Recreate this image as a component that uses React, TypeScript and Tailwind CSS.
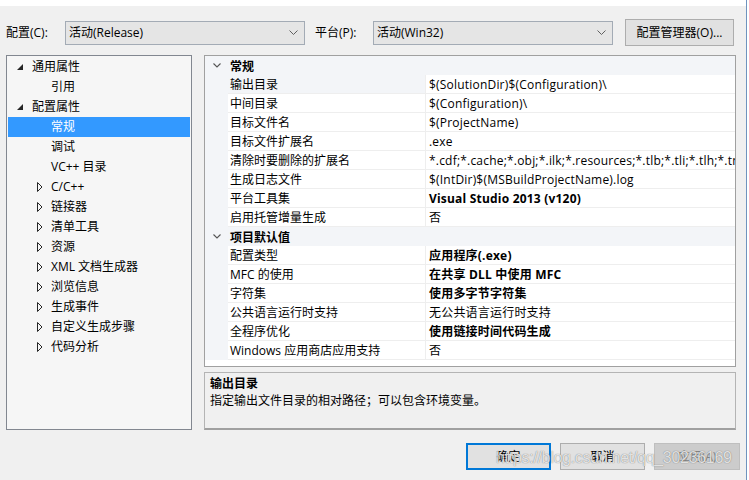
import React from "react";

type TreeItem = { label: string; level: 0 | 1; arrow?: "open" | "closed"; selected?: boolean };

const tree: TreeItem[] = [
  { label: "通用属性", level: 0, arrow: "open" },
  { label: "引用", level: 1 },
  { label: "配置属性", level: 0, arrow: "open" },
  { label: "常规", level: 1, selected: true },
  { label: "调试", level: 1 },
  { label: "VC++ 目录", level: 1 },
  { label: "C/C++", level: 1, arrow: "closed" },
  { label: "链接器", level: 1, arrow: "closed" },
  { label: "清单工具", level: 1, arrow: "closed" },
  { label: "资源", level: 1, arrow: "closed" },
  { label: "XML 文档生成器", level: 1, arrow: "closed" },
  { label: "浏览信息", level: 1, arrow: "closed" },
  { label: "生成事件", level: 1, arrow: "closed" },
  { label: "自定义生成步骤", level: 1, arrow: "closed" },
  { label: "代码分析", level: 1, arrow: "closed" },
];

type GridRow = { cat?: string; name?: string; value?: string; bold?: boolean; selected?: boolean };

const grid: GridRow[] = [
  { cat: "常规" },
  { name: "输出目录", value: "$(SolutionDir)$(Configuration)\\", selected: true },
  { name: "中间目录", value: "$(Configuration)\\" },
  { name: "目标文件名", value: "$(ProjectName)" },
  { name: "目标文件扩展名", value: ".exe" },
  { name: "清除时要删除的扩展名", value: "*.cdf;*.cache;*.obj;*.ilk;*.resources;*.tlb;*.tli;*.tlh;*.tmp;*.rsp;*.pgc;*.pgd;*.meta;$(TargetPath)" },
  { name: "生成日志文件", value: "$(IntDir)$(MSBuildProjectName).log" },
  { name: "平台工具集", value: "Visual Studio 2013 (v120)", bold: true },
  { name: "启用托管增量生成", value: "否" },
  { cat: "项目默认值" },
  { name: "配置类型", value: "应用程序(.exe)", bold: true },
  { name: "MFC 的使用", value: "在共享 DLL 中使用 MFC", bold: true },
  { name: "字符集", value: "使用多字节字符集", bold: true },
  { name: "公共语言运行时支持", value: "无公共语言运行时支持" },
  { name: "全程序优化", value: "使用链接时间代码生成", bold: true },
  { name: "Windows 应用商店应用支持", value: "否" },
];

function ComboChevron() {
  return (
    <svg width="9" height="5" viewBox="0 0 9 5" className="shrink-0">
      <polyline points="0.5,0.5 4.5,4.5 8.5,0.5" fill="none" stroke="#606060" strokeWidth="1" />
    </svg>
  );
}

function Combo({ value, className }: { value: string; className: string }) {
  return (
    <div className={`flex h-6 items-center justify-between border border-[#a3abb5] bg-[#e5e5e5] pl-[3px] pr-[6px] ${className}`}>
      <span className="pt-[1px]">{value}</span>
      <ComboChevron />
    </div>
  );
}

function TreeArrow({ kind }: { kind: "open" | "closed" }) {
  if (kind === "open") {
    return (
      <svg width="6" height="6" viewBox="0 0 6 6">
        <polygon points="0,6 6,6 6,0" fill="#262626" />
      </svg>
    );
  }
  return (
    <svg width="6" height="10" viewBox="0 0 6 10">
      <polygon points="0.5,0.5 5,5 0.5,9.5" fill="none" stroke="#262626" strokeWidth="1" />
    </svg>
  );
}

function TreeRow({ item }: { item: TreeItem }) {
  const pad = item.level === 0 ? "pl-[9px]" : "pl-[29px]";
  const arrowBox = item.level === 0 ? "w-[15px]" : "w-[14px]";
  return (
    <div className={`flex h-5 items-center ${pad} ${item.selected ? "bg-[#3399ff] text-white" : ""}`}>
      <div className={`flex items-center ${arrowBox}`}>{item.arrow && <TreeArrow kind={item.arrow} />}</div>
      <span className="whitespace-nowrap">{item.label}</span>
    </div>
  );
}

function GridLine({ row }: { row: GridRow }) {
  if (row.cat) {
    return (
      <div className="flex h-[19px] items-center bg-[#f3f5f8]">
        <div className="flex w-[23px] justify-center pl-[1px]">
          <svg width="8" height="5" viewBox="0 0 8 5">
            <polyline points="0.5,0.5 4,4 7.5,0.5" fill="none" stroke="#555555" strokeWidth="1.1" />
          </svg>
        </div>
        <span className="pl-[2px] pt-[2px] font-bold">{row.cat}</span>
      </div>
    );
  }
  return (
    <div className="flex h-[19px]">
      <div className="w-[23px] shrink-0 bg-[#f3f5f8]" />
      <div
        className={`flex w-[197px] shrink-0 items-center overflow-hidden whitespace-nowrap border-b border-[#eeeeee] pl-[2px] pt-[2px] ${
          row.selected ? "bg-[#f3f5f8]" : "bg-white"
        }`}
      >
        {row.name}
      </div>
      <div
        className={`flex min-w-0 flex-1 items-center overflow-hidden whitespace-nowrap border-b border-l border-[#eeeeee] bg-white pl-[3px] pt-[2px] tracking-[0.2px] ${
          row.bold ? "font-bold" : ""
        }`}
      >
        {row.value}
      </div>
    </div>
  );
}

function DialogButton({ label, kind }: { label: string; kind: "default" | "normal" | "disabled" }) {
  const styles = {
    default: "border-2 border-[#0078d7] bg-[#e1e1e1] text-black",
    normal: "border border-[#adadad] bg-[#e1e1e1] text-black",
    disabled: "border border-[#bfbfbf] bg-[#cccccc] text-[#838383]",
  }[kind];
  return <div className={`flex h-full items-center justify-center ${styles}`}>{label}</div>;
}

export default function App() {
  return (
    <div className="relative flex h-[480px] w-[749px] overflow-hidden bg-white font-['Open_Sans','Noto_Sans_CJK_SC',sans-serif] text-[12px] leading-none text-black">
      <div className="flex w-[746px] flex-col bg-[#f0f0f0]">
        <div className="h-[6px] bg-white" />

        {/* toolbar */}
        <div className="mt-[13px] flex h-[27px] items-center">
          <span className="ml-[6px] w-[59px] pt-[1px]">配置(C):</span>
          <Combo value="活动(Release)" className="w-[240px]" />
          <span className="ml-[10px] w-[58px] pt-[1px]">平台(P):</span>
          <Combo value="活动(Win32)" className="w-[240px]" />
          <div className="ml-[12px] flex h-[27px] w-[109px] items-center justify-center border border-[#adadad] bg-[#e1e1e1] pt-[1px]">
            配置管理器(O)...
          </div>
        </div>

        {/* main content */}
        <div className="mt-[9px] flex h-[375px]">
          <div className="ml-[6px] w-[186px] border border-[#828790] bg-[#f6f6f6] p-px">
            {tree.map((t) => (
              <TreeRow key={t.label} item={t} />
            ))}
          </div>

          <div className="ml-[12px] flex w-[532px] flex-col">
            <div className="h-[312px] overflow-hidden border border-[#a0a0a0] bg-white">
              {grid.map((r, i) => (
                <GridLine key={i} row={r} />
              ))}
            </div>
            <div className="mt-[5px] h-[58px] border border-b-2 border-[#b4b4b4] border-b-[#a0a0a0] bg-[#f0f0f0] px-[5px] pt-[5px]">
              <div className="font-bold">输出目录</div>
              <div className="mt-[5px]">指定输出文件目录的相对路径；可以包含环境变量。</div>
            </div>
          </div>
        </div>

        {/* dialog buttons */}
        <div className="mt-[13px] flex h-[27px] justify-end gap-[9px] pr-[6px]">
          <div className="w-[85px]">
            <DialogButton label="确定" kind="default" />
          </div>
          <div className="w-[85px]">
            <DialogButton label="取消" kind="normal" />
          </div>
          <div className="w-[86px]">
            <DialogButton label="应用(A)" kind="disabled" />
          </div>
        </div>
      </div>
      <div className="w-px bg-[#6f93be]" />
      <div className="flex-1 bg-white" />

      {/* watermark */}
      <div className="pointer-events-none absolute left-[496px] top-[450px] font-['Liberation_Sans',sans-serif] text-[16px] tracking-[-0.3px] text-white/80 [text-shadow:0_0_1px_rgba(0,0,0,0.6)]">
        https://blog.csdn.net/qq_30236169
      </div>
    </div>
  );
}
